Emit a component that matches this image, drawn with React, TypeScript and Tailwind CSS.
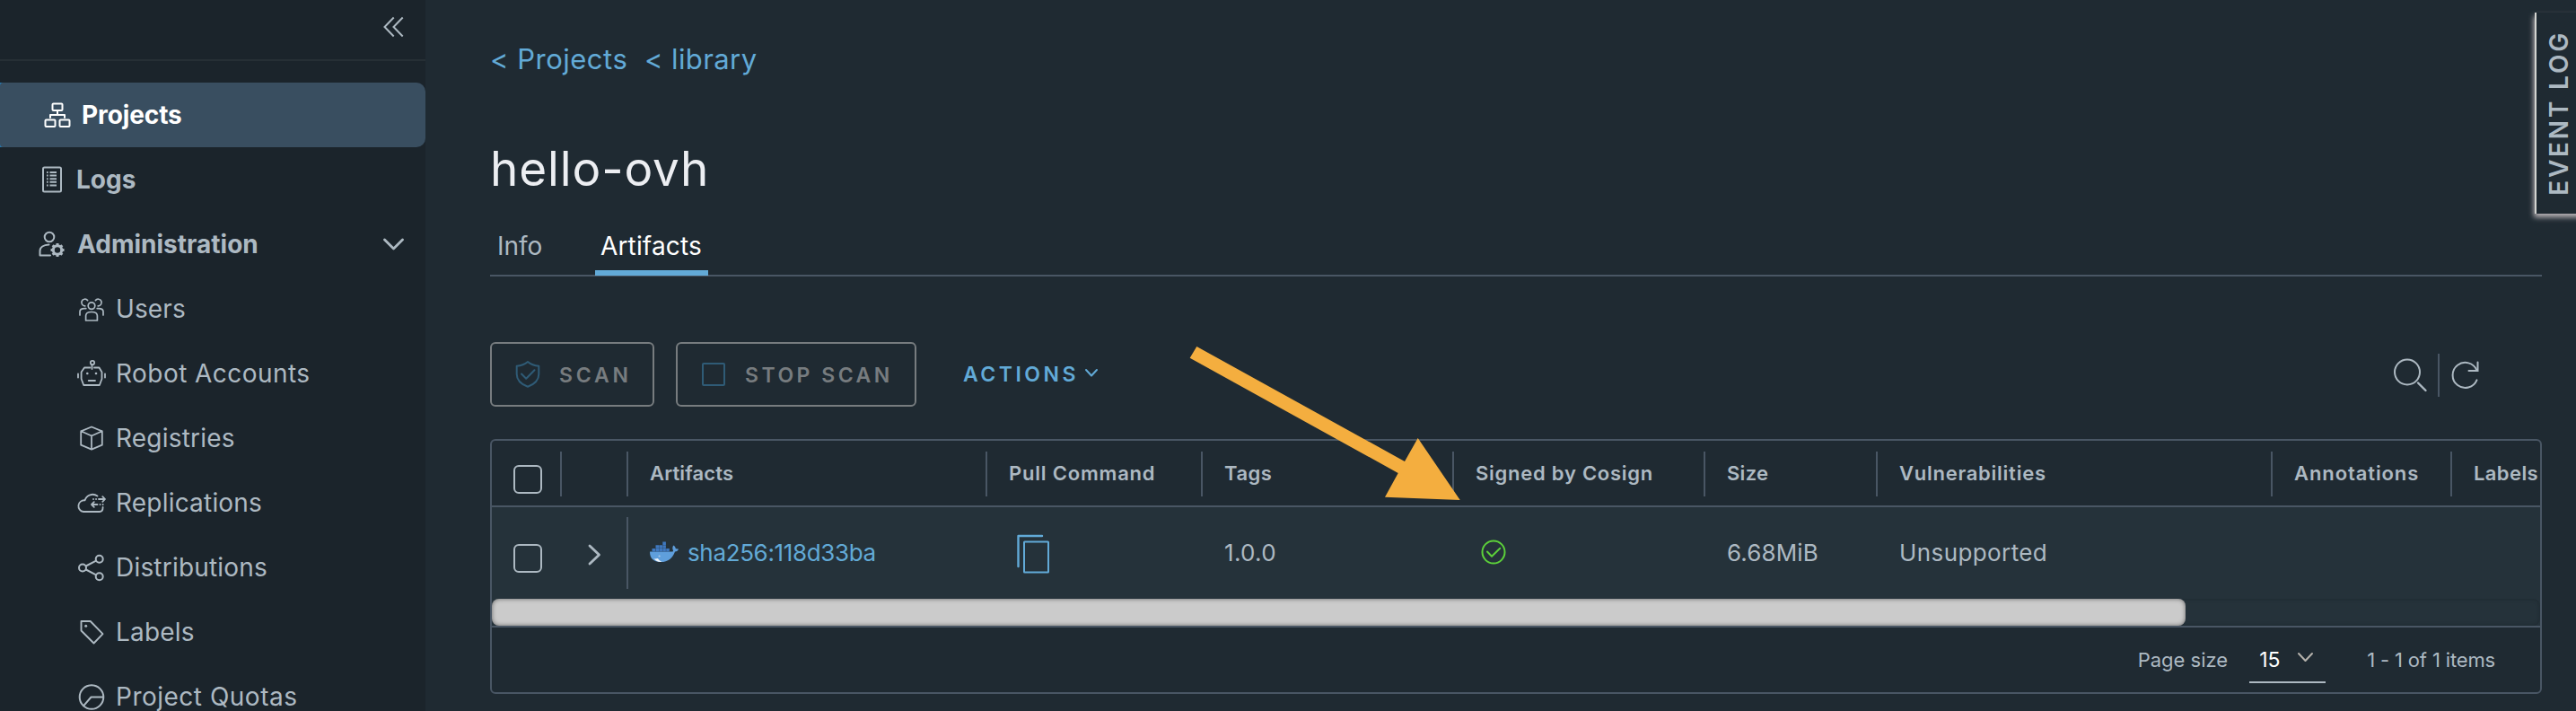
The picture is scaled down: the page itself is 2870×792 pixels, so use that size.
import type { ReactNode } from "react";

type IconProps = { box: string; className?: string; children: ReactNode };

/* Line icon; width and height come from the view box. */
function Icon({ box, className = "", children }: IconProps) {
  const [, , w, h] = box.split(" ");
  return (
    <svg
      viewBox={box}
      width={w}
      height={h}
      fill="none"
      stroke="currentColor"
      strokeWidth={2}
      strokeLinecap="round"
      strokeLinejoin="round"
      className={`shrink-0 ${className}`}
    >
      {children}
    </svg>
  );
}

const UsersIcon = () => (
  <Icon box="0 0 32 32" className="mt-[2px]">
    <g strokeWidth="1.7">
      <circle cx="16" cy="11.6" r="3.8" />
      <path d="M9.6 28v-5.200c0-2.600 2.600-4.300 6.400-4.300s6.400 1.700 6.400 4.300V28z" />
      <path d="M11.600 5.600A3.800 3.800 0 1 0 8.800 11.800M20.400 5.600a3.800 3.800 0 1 1 2.800 6.200" />
      <path d="M3 22v-4c0-2 2-3.400 5.400-3.400h1.400M29 22v-4c0-2-2-3.400-5.400-3.400h-1.400" />
    </g>
  </Icon>
);

const RobotIcon = () => (
  <Icon box="0 0 32 32">
    <g strokeWidth="1.8">
      <circle cx="17" cy="4" r="2.2" />
      <path d="M16.5 6.4V11" />
      <path d="M14.500 9.500H8l-3.400 5V22l2.600 7h17.700l2.600-7v-7.500l-3-5H19" />
      <path d="M1 16.500v4M31 16.500v4M12.700 24h7.300" />
    </g>
    <circle cx="11.300" cy="16" r="1.300" fill="currentColor" stroke="none" />
    <circle cx="21" cy="16" r="1.300" fill="currentColor" stroke="none" />
  </Icon>
);

const CubeIcon = () => (
  <Icon box="0 0 32 32">
    <path d="M16 3.500 4.200 8.300v15.400L16 28.700l11.800-5V8.300zM4.200 8.300 16 13.500l11.800-5.200M16 13.500v15.200" strokeWidth="1.8" />
  </Icon>
);

const CloudIcon = () => (
  <Icon box="0 0 32 32">
    <g strokeWidth="1.8">
      <path d="M22.500 8.500A9 9 0 0 0 8.600 13.300 6.300 6.300 0 0 0 7 26h18c2.300 0 3.600-2.200 3.600-5" />
      <path d="M24 12h7M28.300 9.200 31 12l-2.700 2.800M22.500 18H16M18.800 15.200 16 18l2.800 2.800" />
      <path d="M18 12h.1M21 12h.1M25.500 18h.1M28.600 18h.1" />
    </g>
  </Icon>
);

const ShareIcon = () => (
  <Icon box="0 0 32 32">
    <circle cx="6" cy="16.500" r="4" />
    <circle cx="24.700" cy="6.700" r="4" />
    <circle cx="24.700" cy="26.200" r="4" />
    <path d="M9.800 14.500 21 8.700M9.800 18.500 21 24.300" />
  </Icon>
);

const TagIcon = () => (
  <Icon box="0 0 32 32">
    <path d="M4.500 4h10.200l13.800 14.200-10 10.300L4.500 14.500z" strokeWidth="1.9" />
    <circle cx="9.700" cy="9.200" r="1.500" fill="currentColor" stroke="none" />
  </Icon>
);

const QuotaIcon = () => (
  <Icon box="0 0 32 32">
    <circle cx="16" cy="16.500" r="13.300" />
    <path d="M29 16.500H15.500L7 26.300" />
  </Icon>
);

const subItems = [
  { label: "Users", icon: <UsersIcon />, tracking: "tracking-[0.1px]" },
  { label: "Robot Accounts", icon: <RobotIcon />, tracking: "tracking-[0.45px]" },
  { label: "Registries", icon: <CubeIcon />, tracking: "tracking-[0.2px]" },
  { label: "Replications", icon: <CloudIcon />, tracking: "tracking-[0.2px]" },
  { label: "Distributions", icon: <ShareIcon />, tracking: "tracking-[0.2px]" },
  { label: "Labels", icon: <TagIcon />, tracking: "tracking-[0.2px]" },
  { label: "Project Quotas", icon: <QuotaIcon />, tracking: "tracking-[0.5px]" },
];

function Sidebar() {
  return (
    <aside className="h-[792px] w-[474px] shrink-0 overflow-hidden bg-[#1b242b] text-[28px] text-[#adb9c2]">
      <div className="flex h-[68px] items-center justify-end border-b-2 border-[#262f35] pr-6 pb-[6px]">
        <Icon box="0 0 23 24">
          <path d="M11.700 1.500 1.500 12l10.200 10.500M21.700 1.500 11.500 12l10.200 10.500" strokeLinecap="butt" strokeLinejoin="miter" />
        </Icon>
      </div>
      <nav className="flex flex-col pt-6">
        <div className="bg-[linear-gradient(to_right,#2676ac_4px,transparent_4px)]">
          <div className="flex h-[72px] items-center rounded-l-[4px] rounded-r-[10px] bg-[#394e60] pl-[49px] font-bold text-white">
            <Icon box="49 113 30 30">
              <rect x="58.500" y="115.500" width="11" height="7.500" rx="1" />
              <path d="M64 123v4.500M56 131v-3h16v3" />
              <rect x="50.500" y="133.500" width="11" height="7.500" rx="1" />
              <rect x="66.500" y="133.500" width="11" height="7.500" rx="1" />
            </Icon>
            <span className="-mt-[1px] ml-3 tracking-[-0.1px]">Projects</span>
          </div>
        </div>
        <div className="flex h-[72px] items-center pl-[46px] font-bold">
          <Icon box="0 0 24 30">
            <rect x="2" y="1.500" width="20" height="27" rx="1.500" />
            <path d="M9.500 7h7.500M9.500 10.600h7.500M9.500 14.200h7.500M9.500 17.800h7.500M9.500 21.400h7.500M6 7h1.600M6 10.600h1.600M6 14.200h1.600M6 17.800h1.600M6 21.400h1.600" strokeLinecap="butt" />
          </Icon>
          <span className="-mt-[1px] ml-[15px]">Logs</span>
        </div>
        <div className="flex h-[72px] items-center pr-6 pl-[43px] font-bold">
          <Icon box="0 0 30 30">
            <circle cx="12" cy="7" r="5.300" />
            <path d="M13 27.500H1.500v-5c0-4 4-6.800 10-7" />
            <circle cx="21" cy="21.500" r="4.700" strokeWidth="3" />
            <path d="M21 14v2.500M21 26.500V29M13.500 21.500H16M26 21.500h2.500M15.700 16.200l1.800 1.800M24.500 25l1.800 1.800M26.300 16.200 24.500 18M17.500 25l-1.800 1.800" strokeWidth="3" strokeLinecap="butt" />
          </Icon>
          <span className="-mt-[1px] ml-[13px] flex-1">Administration</span>
          <Icon box="0 0 23 15">
            <path d="M1.500 2 11.500 12 21.500 2" strokeWidth="2.8" />
          </Icon>
        </div>
        {subItems.map((item) => (
          <div key={item.label} className="flex h-[72px] items-center pl-[86px]">
            {item.icon}
            <span className={`-mt-[1px] ml-[11px] whitespace-nowrap ${item.tracking}`}>{item.label}</span>
          </div>
        ))}
      </nav>
    </aside>
  );
}

function Toolbar() {
  return (
    <div className="mt-[73px] flex h-[72px] items-center text-[23px] font-semibold">
      <button className="flex h-[72px] w-[183px] items-center rounded-[6px] border-2 border-[#777c7f] pl-[26px] text-[#777c7f]">
        <Icon box="0 0 28 32" className="text-[#2f5b76]">
          <path d="M14 2c3 2.500 7.500 4.300 12.300 4.700v9c0 6.500-5 11.300-12.300 14-7.300-2.700-12.300-7.500-12.300-14v-9C6.500 6.300 11 4.500 14 2z" />
          <path d="m7 15.500 5.200 5.200 9.300-9.500" />
        </Icon>
        <span className="mt-[2px] ml-[21px] tracking-[3.8px]">SCAN</span>
      </button>
      <button className="ml-6 flex h-[72px] w-[268px] items-center rounded-[6px] border-2 border-[#777c7f] pl-[27px] text-[#777c7f]">
        <Icon box="0 0 26 26" className="text-[#2f5b76]">
          <rect x="1" y="1" width="24" height="24" rx="1" />
        </Icon>
        <span className="mt-[2px] ml-[22px] tracking-[3.5px] whitespace-nowrap">STOP SCAN</span>
      </button>
      <button className="ml-[52px] flex h-[72px] items-center text-[#62aad7]">
        <span className="tracking-[3.5px]">ACTIONS</span>
        <Icon box="0 0 16 11" className="-mt-[3px] ml-[6px]">
          <path d="m2 2 6 6.500L14 2" />
        </Icon>
      </button>
      <div className="ml-auto flex items-center pt-[1px] pr-[69px] text-[#adb9c2]">
        <Icon box="2666 398 40 40">
          <circle cx="2682" cy="414.500" r="14" />
          <path d="m2694 426.500 8.500 8.500" strokeWidth="2.4" />
        </Icon>
        <div className="ml-[10px] h-12 w-[2px] bg-[#495664]" />
        <Icon box="2730 400 33 36" className="ml-3">
          <path d="M2759.500 423.300A14 14 0 1 1 2759.500 412.500" />
          <path d="M2750.500 413h10v-9.500" strokeLinejoin="miter" />
        </Icon>
      </div>
    </div>
  );
}

const columns = [
  { label: "Artifacts", className: "w-[400px] pl-6", tracking: "tracking-[0.15px]" },
  { label: "Pull Command", className: "w-[240px] pl-6", tracking: "tracking-[0.8px]" },
  { label: "Tags", className: "w-[280px] pl-6", tracking: "tracking-[0.5px]" },
  { label: "Signed by Cosign", className: "w-[280px] pl-6", tracking: "tracking-[0.75px]" },
  { label: "Size", className: "w-[192px] pl-6", tracking: "tracking-[0.3px]" },
  { label: "Vulnerabilities", className: "w-[440px] pl-6", tracking: "tracking-[0.75px]" },
  { label: "Annotations", className: "w-[200px] pl-6", tracking: "tracking-[0.9px]" },
];

const Rule = () => <div className="h-[50px] w-[2px] shrink-0 bg-[#495664]" />;
const Checkbox = () => <div className="h-8 w-8 rounded-[6px] border-2 border-[#adb9c2]" />;

function Whale() {
  return (
    <svg viewBox="0 0 32 24" width="32" height="24" className="shrink-0">
      <path d="M0 11.500h24.500c1.500 0 1.800-.7 1.300-1.800-.8-1.700-.6-3.700.5-5.200 1.700 1 2.400 2.300 2.500 3.800 1.300-.3 2.500-.1 3.200.5-.6 1.700-2 2.500-4 2.600C25.500 18.500 20.500 23 12 23 4 23 0 19 0 11.500z" fill="#5f9fdc" />
      <path d="M2.500 8h3.600v3.500H2.500zM6.500 8h3.600v3.500H6.500zM10.400 8H14v3.500h-3.600zM14.300 8h3.600v3.500h-3.600zM18.200 8h3.600v3.500h-3.600zM6.500 4.200h3.600v3.500H6.500zM10.400 4.200H14v3.500h-3.600zM14.300 4.200h3.600v3.500h-3.600zM14.300.5h3.600V4h-3.600z" fill="#3f78bf" />
      <path d="M4.500 19.300c1.500.4 3 .2 4.500-.3 1 1.700 2.500 3 4.500 3.900-4 .4-7-.9-9-3.600z" fill="#f0f4f8" />
      <circle cx="10.600" cy="16.500" r="1.100" fill="#a9c6e3" />
    </svg>
  );
}

function Datagrid() {
  return (
    <section className="mt-9 flex h-[284px] flex-col overflow-hidden rounded-[6px] border-2 border-[#495664]">
      <div className="flex h-[74px] shrink-0 overflow-hidden border-b-2 border-[#495664] pt-3 text-[22px] leading-[48px] font-semibold text-[#adb9c2]">
        <div className="flex w-[78px] shrink-0 items-start justify-between pl-6">
          <div className="pt-[15px]">
            <Checkbox />
          </div>
          <Rule />
        </div>
        <div className="flex w-[74px] shrink-0 justify-end">
          <Rule />
        </div>
        {columns.map((c) => (
          <div key={c.label} className={`flex shrink-0 justify-between whitespace-nowrap ${c.className}`}>
            <span className={c.tracking}>{c.label}</span>
            <Rule />
          </div>
        ))}
        <div className="shrink-0 pl-6 tracking-[0.4px]">Labels</div>
      </div>
      <div className="flex h-[102px] shrink-0 items-center bg-[#25323a] pb-[2px] text-[26px] text-[#adb9c2]">
        <div className="flex w-[76px] shrink-0 pt-[14px] pl-6">
          <Checkbox />
        </div>
        <div className="flex w-[76px] shrink-0 items-center justify-between pt-[2px] pl-[30px]">
          <Icon box="0 0 17 24" className="mt-1">
            <path d="m3 2 10.500 10L3 22" strokeWidth="2.8" />
          </Icon>
          <div className="h-20 w-[2px] bg-[#495664]" />
        </div>
        <div className="flex w-[400px] shrink-0 items-center pl-6 text-[#62aad7]">
          <Whale />
          <span className="ml-[10px] tracking-[-0.35px]">sha256:118d33ba</span>
        </div>
        <div className="w-[240px] shrink-0 pt-[3px] pl-[32px] text-[#62aad7]">
          <Icon box="0 0 38 44">
            <rect x="9" y="8.500" width="27" height="34" rx="0.500" />
            <path d="M2.500 36V2H29" strokeWidth="2.4" />
          </Icon>
        </div>
        <div className="w-[280px] shrink-0 pl-6 tracking-[0.3px]">1.0.0</div>
        <div className="w-[280px] shrink-0 pl-[30px] text-[#5cd03a]">
          <Icon box="0 0 28 28">
            <circle cx="14" cy="14" r="12.500" />
            <path d="m7 13.500 5 5.200 9.200-9" />
          </Icon>
        </div>
        <div className="w-[192px] shrink-0 pl-6 tracking-[0.1px]">6.68MiB</div>
        <div className="shrink-0 pl-6 tracking-[0.4px]">Unsupported</div>
      </div>
      <div className="h-[30px] shrink-0 bg-[#25323a]">
        <div className="h-[30px] rounded-[8px] shadow-[inset_0_0_5px_rgba(0,0,0,0.2)]">
          <div className="h-[30px] w-[1887px] rounded-[8px] bg-[#cbcbcb] shadow-[inset_0_0_5px_rgba(0,0,0,0.5)]" />
        </div>
      </div>
      <div className="flex flex-1 items-center justify-end border-t-2 border-[#495664] pr-[50px] text-[22px] text-[#adb9c2]">
        <span>Page size</span>
        <div className="mt-[2px] ml-6 flex h-[50px] w-[85px] items-center justify-between border-b-2 border-[#adb9c2] pr-[13px] pl-[11px] text-[23px] text-white">
          <span>15</span>
          <Icon box="0 0 19 13" className="-mt-[5px] text-[#b5b2ac]">
            <path d="m2 2 7.500 8L17 2" />
          </Icon>
        </div>
        <span className="ml-[46px] tracking-[-0.15px]">1 - 1 of 1 items</span>
      </div>
    </section>
  );
}

export default function App() {
  return (
    <div className="relative flex h-[792px] w-[2870px] overflow-hidden bg-[#1f2a32] font-['Inter',sans-serif]">
      <Sidebar />
      <main className="flex flex-1 flex-col pt-[46px] pr-[38px] pl-[72px]">
        <div className="flex h-10 items-center text-[31px] whitespace-pre text-[#62aad7]">
          <a className="w-[172px] tracking-[0.5px]">{"< Projects"}</a>
          <a className="tracking-[0.4px]">{"< library"}</a>
        </div>
        <h1 className="mt-[72px] h-[60px] text-[53px] leading-[60px] tracking-[0.9px] text-[#eceef2]">hello-ovh</h1>
        <div className="mt-[30px] flex h-[60px] border-b-2 border-[#495664] text-[28px] leading-[53px] text-[#adb9c2]">
          <div className="w-[117px] pl-2">Info</div>
          <div className="flex h-[59px] w-[126px] flex-col justify-between border-b-[6px] border-[#62aad7] pl-[6px] tracking-[0.15px] text-white">
            Artifacts
          </div>
        </div>
        <Toolbar />
        <Datagrid />
      </main>

      <div className="absolute top-[14px] left-[2824px] flex h-[224px] w-[56px] items-center border-l-2 border-[#d3d4d0] bg-[#1f2a32] pl-[9px] shadow-[-1px_4px_6px_rgba(225,215,218,0.8)]">
        <span className="w-[32px] rotate-180 text-center text-[28px] leading-[32px] font-semibold tracking-[2.8px] whitespace-nowrap text-[#adb9c2] [writing-mode:vertical-rl]">
          EVENT LOG
        </span>
      </div>

      <svg viewBox="1320 380 312 184" width="312" height="184" className="absolute top-[380px] left-[1320px]">
        <polygon points="1333.3,386 1565,514 1579.7,488 1626.7,557 1543,553.7 1557.7,527 1325.7,398.7" fill="#f4ae3f" />
      </svg>
    </div>
  );
}
